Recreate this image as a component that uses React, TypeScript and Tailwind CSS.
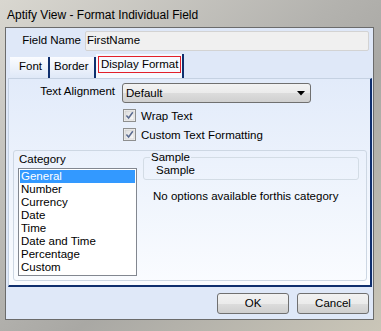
import React from "react";

const categories = ["General", "Number", "Currency", "Date", "Time", "Date and Time", "Percentage", "Custom"];

function CheckBox({ label }: { label: string }) {
    return (
        <div className="flex items-center h-[13px]">
            <svg width="13" height="13" viewBox="0 0 13 13" className="shrink-0">
                <defs>
                    <linearGradient id="cbg" x1="0" y1="0" x2="1" y2="1">
                        <stop offset="0" stopColor="#dcdcdc" />
                        <stop offset="1" stopColor="#fbfbfb" />
                    </linearGradient>
                </defs>
                <rect x="0.5" y="0.5" width="12" height="12" fill="#f4f4f4" stroke="#8e8f8f" />
                <rect x="2" y="2" width="9" height="9" fill="url(#cbg)" stroke="#c5c5c5" strokeWidth="0.6" />
                <path d="M3.4 6.4 L5.6 9 L9.8 3.2" fill="none" stroke="#5a6b90" strokeWidth="1.5" />
            </svg>
            <span className="ml-[5px] leading-[14px]">{label}</span>
        </div>
    );
}

export default function App() {
    return (
        <div
            className="w-[381px] h-[331px] overflow-hidden text-[11.5px] text-black bg-[linear-gradient(to_bottom_right,#d9d7d0,#b3b2ae_45%,#a9a8a4_60%,#cac6b8)]"
            style={{ fontFamily: '"Liberation Sans", Arial, sans-serif' }}
        >
            {/* title bar */}
            <div className="h-[27px] pl-[7px] flex items-center text-[12px] pt-[3px]">
                Aptify View - Format Individual Field
            </div>

            {/* client area */}
            <div className="ml-[5px] w-[369px] h-[293px] border border-[#6b6b6b] bg-[#dfe8f8] flex flex-col">
                {/* field name */}
                <div className="flex items-center mt-[3px]">
                    <span className="w-[76px] text-right pr-[1px]">Field Name</span>
                    <div className="ml-[3px] w-[284px] h-[20px] bg-[#f0f0f0] border border-[#d3d3d3] rounded-[2px] flex items-center pl-[1px]">
                        FirstName
                    </div>
                </div>

                {/* tabs */}
                <div className="flex items-end h-[24px] mt-[3px] ml-[4px] whitespace-nowrap">
                    <div className="h-[21px] w-[40px] pl-[9px] pb-[1px] flex items-center border-r-[2px] border-[#0f2f6e] bg-[linear-gradient(#fbfcff,#dfe8f7)]">
                        Font
                    </div>
                    <div className="h-[21px] w-[46px] pl-[4px] pb-[1px] flex items-center border-r-[2px] border-[#0f2f6e] bg-[linear-gradient(#fbfcff,#dfe8f7)]">
                        Border
                    </div>
                    <div className="h-[24px] w-[88px] pl-[2px] pt-[2px] border-r-[2px] border-[#0f2f6e] bg-[#f6f9fe]">
                        <div className="w-[83px] h-[17px] border border-[#e2202a] flex items-center pl-[2px]">
                            Display Format
                        </div>
                    </div>
                </div>

                {/* tab panel */}
                <div className="ml-[2px] w-[364px] h-[209px] border-t border-l border-[#c5d1e2] border-r-[2px] border-b-[2px] border-r-[#0f2f6e] border-b-[#0f2f6e] bg-[linear-gradient(#e2ebfa,#fafcff)] flex flex-col">
                    <div className="flex items-center mt-[4px]">
                        <span className="w-[107px] text-right pr-[1px] -mt-[3px]">Text Alignment</span>
                        <div className="ml-[6px] w-[189px] h-[20px] border border-[#707070] rounded-[3px] bg-[linear-gradient(#f3f3f3_0%,#ebebeb_50%,#dcdcdc_51%,#d0d0d0_100%)] flex items-center pl-[3px] pr-[5px] justify-between">
                            <span className="mt-[2px]">Default</span>
                            <svg width="8" height="5" viewBox="0 0 8 5">
                                <path d="M0 0 H8 L4 4.5 Z" fill="#000" />
                            </svg>
                        </div>
                    </div>
                    <div className="ml-[114px] mt-[6px] flex flex-col gap-[6px]">
                        <CheckBox label="Wrap Text" />
                        <CheckBox label="Custom Text Formatting" />
                    </div>

                    {/* category group */}
                    <div className="ml-[4px] mt-[9px] w-[354px] h-[131px] border border-[#cdd7e3] rounded-[3px] flex">
                        <div className="ml-[4px] w-[119px] flex flex-col">
                            <span className="pl-[1px] mt-[1px] leading-[14px]">Category</span>
                            <div className="mt-[2px] w-[119px] h-[108px] border border-[#828790] bg-white p-[1px] flex flex-col">
                                {categories.map((c, i) => (
                                    <div
                                        key={c}
                                        className={
                                            i === 0
                                                ? "h-[13px] leading-[13px] pl-[1px] bg-[#3399ff] text-white"
                                                : "h-[13px] leading-[13px] pl-[1px]"
                                        }
                                    >
                                        {c}
                                    </div>
                                ))}
                            </div>
                        </div>
                        <div className="ml-[6px] w-[216px] flex flex-col">
                            <fieldset className="border border-[#d3dce5] rounded-[3px] pb-[2px]">
                                <legend className="ml-[6px] px-[1px] leading-[12px]">Sample</legend>
                                <div className="pl-[12px] leading-[14px]">Sample</div>
                            </fieldset>
                            <div className="mt-[9px] pl-[10px] leading-[14px]">
                                No options available forthis category
                            </div>
                        </div>
                    </div>
                </div>

                {/* buttons */}
                <div className="flex justify-end gap-[8px] pr-[4px] pt-[6px]">
                    <button className="w-[72px] h-[21px] border border-[#707070] rounded-[3px] bg-[linear-gradient(#f2f2f2_0%,#ebebeb_50%,#dddddd_51%,#cfcfcf_100%)]">
                        OK
                    </button>
                    <button className="w-[72px] h-[21px] border border-[#707070] rounded-[3px] bg-[linear-gradient(#f2f2f2_0%,#ebebeb_50%,#dddddd_51%,#cfcfcf_100%)]">
                        Cancel
                    </button>
                </div>
            </div>
        </div>
    );
}
